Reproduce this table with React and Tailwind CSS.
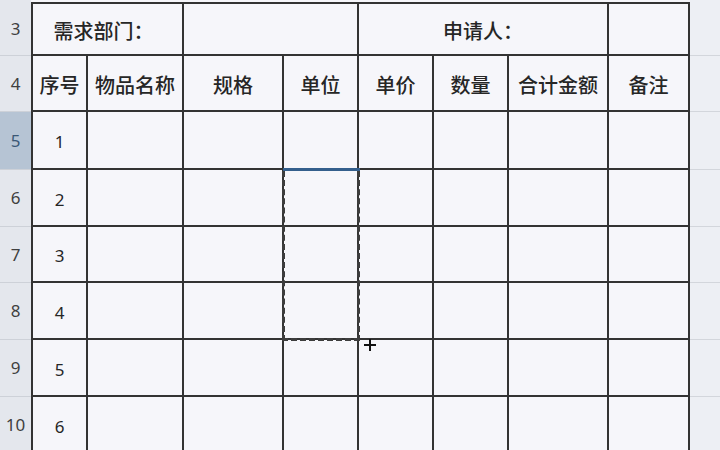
const COLS = ['序号', '物品名称', '规格', '单位', '单价', '数量', '合计金额', '备注']
const BODY = [
  { row: 5, n: 1 },
  { row: 6, n: 2 },
  { row: 7, n: 3 },
  { row: 8, n: 4 },
  { row: 9, n: 5 },
  { row: 10, n: 6 },
]

const cn = { fontFamily: '"Noto Sans CJK SC", "Noto Sans", sans-serif' }

function RowHead({ children, active }) {
  return (
    <div
      className={
        'flex items-center justify-center border-b border-[#cdd1d8] text-[17px] ' +
        (active ? 'bg-[#b6c4d4] text-[#3b5876]' : 'bg-[#e4e7ed] text-[#3f3f3f]')
      }
      style={{ fontFamily: '"Noto Sans", sans-serif' }}
    >
      {children}
    </div>
  )
}

function Cell({ children, first, span, top }) {
  return (
    <div
      className={
        'flex items-center justify-center bg-[#f6f6fa] border-r-2 border-b-2 border-[#333] text-[#262626] ' +
        (first ? 'border-l-2 ' : '') +
        (top ? 'border-t-2 ' : '') +
        (span === 2 ? 'col-span-2 ' : span === 3 ? 'col-span-3 ' : '')
      }
    >
      {children}
    </div>
  )
}

function Side() {
  return <div className="bg-[#edeff4] border-b border-[#d3d6dc]" />
}

export default function App() {
  return (
    <div className="relative w-[720px] h-[450px] overflow-hidden bg-[#f6f6fa]" style={cn}>
      <div className="grid grid-cols-[31px_57px_96px_100px_75px_75px_75px_100px_81px_1fr] grid-rows-[2px_54px_56px_58px_57px_56px_57px_57px_57px]">
        {/* row 2 sliver */}
        <div className="bg-[#e4e7ed]" />
        <div className="col-span-8 bg-[#f6f6fa]" />
        <div className="bg-[#edeff4]" />

        {/* row 3 */}
        <RowHead>3</RowHead>
        <Cell first top span={2}>
          <span className="text-[20px] font-medium pr-2 pt-1">需求部门：</span>
        </Cell>
        <Cell top span={2} />
        <Cell top span={3}>
          <span className="text-[20px] font-medium pt-1">申请人：</span>
        </Cell>
        <Cell top />
        <Side />

        {/* row 4 */}
        <RowHead>4</RowHead>
        {COLS.map((c, i) => (
          <Cell key={c} first={i === 0}>
            <span className="text-[20px] font-medium pt-1">{c}</span>
          </Cell>
        ))}
        <Side />

        {BODY.map((r) => (
          <Row key={r.row} r={r} />
        ))}
      </div>

      {/* active cell bottom edge */}
      <div className="absolute left-[283px] top-[168px] w-[77px] h-[3px] bg-[#345f8c]" />
      {/* copy marquee */}
      <div className="absolute left-[282px] top-[171px] w-[78px] h-[170px] border-[3px] border-t-0 border-dashed border-[#3d3d3d]" />
      {/* fill cursor */}
      <svg className="absolute left-[363px] top-[338px]" width="14" height="14" viewBox="0 0 14 14">
        <path d="M7 1v12M1 7h12" stroke="#111" strokeWidth="2" />
      </svg>
    </div>
  )
}

function Row({ r }) {
  return (
    <>
      <RowHead active={r.row === 5}>{r.row}</RowHead>
      {COLS.map((c, i) => (
        <Cell key={c} first={i === 0}>
          {i === 0 && (
            <span className="text-[17px] pt-1" style={{ fontFamily: '"Noto Sans", sans-serif' }}>
              {r.n}
            </span>
          )}
        </Cell>
      ))}
      <Side />
    </>
  )
}
